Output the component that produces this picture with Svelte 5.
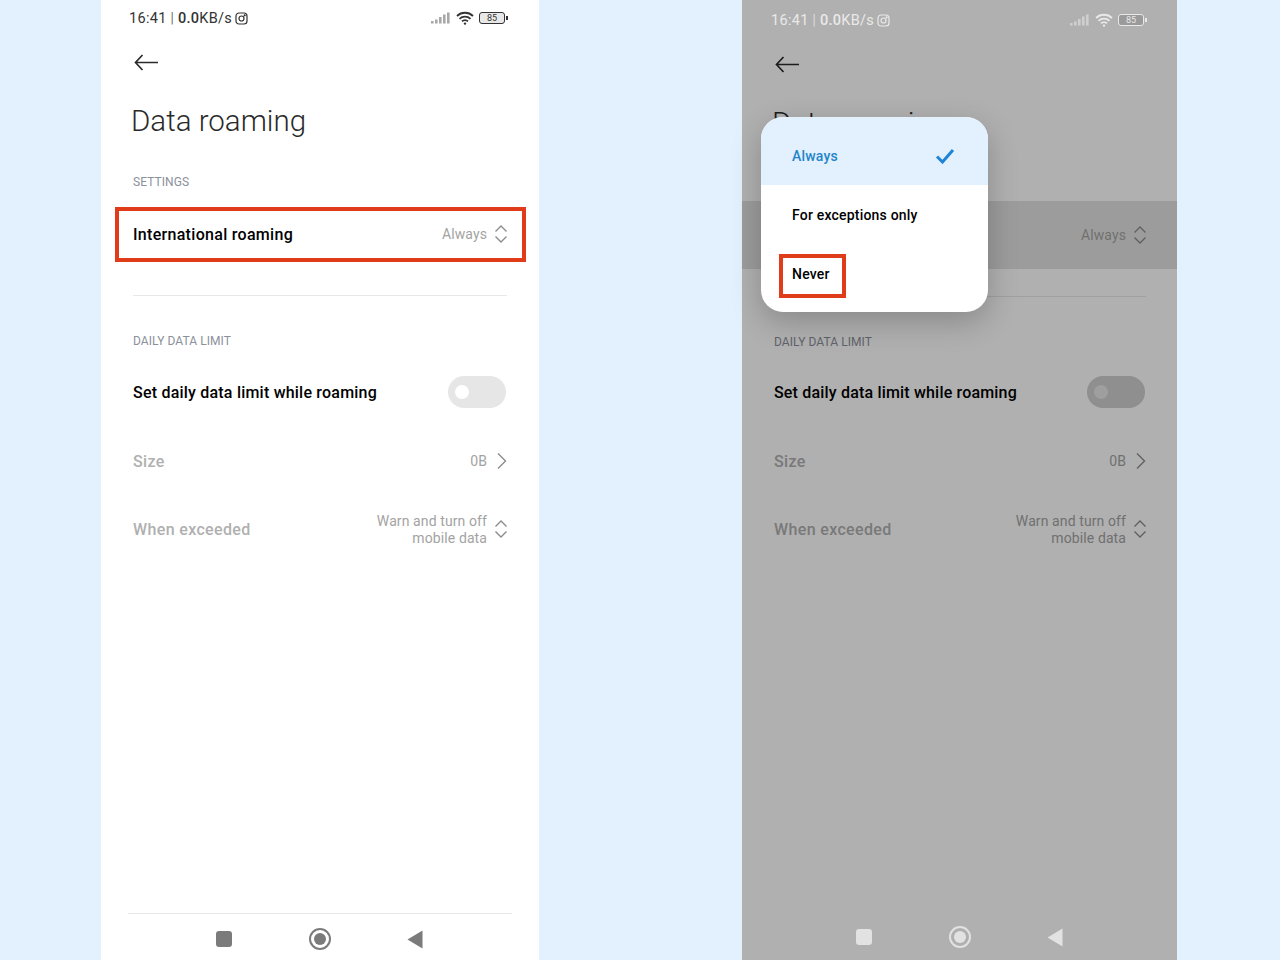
<script>
  const options = ['For exceptions only', 'Never'];
</script>

{#snippet updown()}
  <svg class="updown" width="14" height="20" viewBox="0 0 14 20" fill="none" stroke="currentColor" stroke-width="1.4"><path d="M1.500 7.500 7 2l5.500 5.500M1.500 12.500 7 18l5.500-5.500"/></svg>
{/snippet}

{#snippet status(dim)}
  <div class="status" class:dim>
    <span class="clock">16:41 <i>|</i> <b>0.0</b>KB/s</span>
    <svg class="insta" width="13" height="13" viewBox="0 0 13 13" fill="none" stroke="currentColor" stroke-width="1.200"><rect x="1" y="1" width="11" height="11" rx="3"/><circle cx="6.500" cy="6.500" r="2.500"/><circle cx="9.700" cy="3.300" r=".5" fill="currentColor"/></svg>
    <span class="spacer"></span>
    <svg class="signal" width="20" height="12" viewBox="0 0 20 12" fill="currentColor"><rect x="0" y="9" width="2.600" height="2.500"/><rect x="4" y="7.500" width="2.600" height="4"/><rect x="8" y="5" width="2.600" height="6.500"/><rect x="12" y="2.500" width="2.600" height="9"/><rect x="16" y="0.500" width="2.600" height="11"/></svg>
    <svg class="wifi" width="18" height="14" viewBox="0 0 18 14" fill="none" stroke="currentColor" stroke-width="1.800"><path d="M1 5a11.500 11.500 0 0 1 16 0M3.500 7.800a8 8 0 0 1 11 0M6 10.300a4.200 4.200 0 0 1 6 0"/><circle cx="9" cy="12.600" r="1.200" fill="currentColor" stroke="none"/></svg>
    <span class="battery"><span class="cell">85</span><span class="nub"></span></span>
  </div>
{/snippet}

{#snippet screen(dim)}
  <div class="content" class:dim>
    <div class="back">
      <svg width="24" height="17" viewBox="0 0 24 17" fill="none" stroke="#2b2b2b" stroke-width="1.700"><path d="M24 8.500H1.500M8.500 1 1.500 8.500l7 7.500"/></svg>
    </div>
    <h1>Data roaming</h1>
    <div class="label first">SETTINGS</div>
    <div class="row hl">
      <span class="name">International roaming</span>
      <span class="value">Always</span>
      {@render updown()}
    </div>
    <div class="divider"></div>
    <div class="label second">DAILY DATA LIMIT</div>
    <div class="row toggle-row">
      <span class="name">Set daily data limit while roaming</span>
      <span class="toggle"><span class="knob"></span></span>
    </div>
    <div class="row off">
      <span class="name">Size</span>
      <span class="value">0B</span>
      <svg class="chev" width="14" height="18" viewBox="0 0 14 18" fill="none" stroke="currentColor" stroke-width="1.400"><path d="M4 1.500 11.500 9 4 16.500"/></svg>
    </div>
    <div class="row off">
      <span class="name">When exceeded</span>
      <span class="value two">Warn and turn off<br />mobile data</span>
      {@render updown()}
    </div>
  </div>
{/snippet}

{#snippet navbar(dim)}
  <div class="nav" class:dim>
    <span class="slot"><span class="sq"></span></span>
    <span class="slot"><span class="ring"><span class="dot"></span></span></span>
    <span class="slot tri"><svg width="16" height="19" viewBox="0 0 16 19" fill="currentColor"><path d="M15.500.500v18L.500 9.500z"/></svg></span>
  </div>
{/snippet}

<div class="page">
  <section class="phone left">
    {@render status(false)}
    {@render screen(false)}
    {@render navbar(false)}
    <div class="callout call-row"></div>
  </section>

  <section class="phone right">
    {@render screen(true)}
    <div class="scrim"></div>
    {@render status(true)}
    {@render navbar(true)}
    <div class="popup">
      <div class="opt sel"><span>Always</span>
        <svg width="20" height="16" viewBox="0 0 20 16" fill="none" stroke="#1f85d8" stroke-width="3"><path d="M2 8.500 7.500 14 18 2"/></svg>
      </div>
      {#each options as o}
        <div class="opt">{o}</div>
      {/each}
      <div class="callout call-never"></div>
    </div>
  </section>
</div>

<style>
  :global(body) { margin: 0; }
  .page {
    width: 1280px; height: 960px; overflow: hidden;
    background: #e3f0fd; display: flex; padding-left: 101px; box-sizing: border-box; gap: 203px;
    font-family: Roboto, "Liberation Sans", sans-serif; color: #000;
  }
  .phone { position: relative; height: 960px; background: #fff; display: flex; flex-direction: column; }
  .left { width: 438px; }
  .right { width: 435px; }

  .status {
    height: 36px; padding: 0 31px 0 28px; display: flex; align-items: center;
    font-size: 14.5px; color: #333; flex: none; box-sizing: border-box;
  }
  .status.dim { position: absolute; top: 2px; left: 1px; right: 0; color: #e9e9e9; z-index: 2; padding-right: 30px; }
  .clock { letter-spacing: .3px; white-space: pre; }
  .clock i { font-style: normal; font-weight: 300; }
  .clock b { font-weight: 500; }
  .insta { margin-left: 3px; }
  .spacer { flex: 1; }
  .signal { color: #a8a8a8; margin-right: 5px; }
  .dim .signal { color: #cfcfcf; }
  .wifi { margin-right: 5px; }
  .battery { display: flex; align-items: center; }
  .cell {
    width: 24px; height: 10px; border: 1px solid #333; border-radius: 3px; background: #e8e8e8;
    font-size: 9px; line-height: 10px; text-align: center; color: #333;
  }
  .nub { width: 2px; height: 4px; background: #333; margin-left: 1px; }
  .dim .cell { border-color: #e9e9e9; background: #9a9a9a; color: #e9e9e9; }
  .dim .nub { background: #e9e9e9; }

  .content { padding: 0 32px; flex: none; }
  .content.dim { padding: 40px 31px 0 32px; }
  .back { height: 52px; display: flex; align-items: center; margin-left: 1px; padding-top: 1px; box-sizing: border-box; }
  .dim .back { height: 50px; padding: 0 0 2px; }
  h1 { margin: 0 0 0 -2px; height: 66px; line-height: 66px; font-size: 29.5px; font-weight: 300; color: #2a2a2a; }
  .label { font-size: 12px; height: 28px; line-height: 28px; color: #8b909b; letter-spacing: .07px; }
  .first { margin-top: 14px; }
  .dim .first { margin-top: 12px; }
  .second { margin-top: 31px; }
  .row { height: 68px; display: flex; align-items: center; font-size: 16px; }
  .first + .row { margin-top: 4px; }
  .dim .first + .row { margin-top: 5px; }
  .hl .name { font-weight: 500; letter-spacing: .3px; }
  .toggle-row .name { font-weight: 500; letter-spacing: .21px; }
  .dim .toggle-row .name { letter-spacing: .18px; }
  .name { flex: 1; }
  .dim .hl { background: #e3e3e3; margin: 0 -31px 0 -32px; padding: 0 31px 0 32px; }
  .value { font-size: 14px; color: #a3a3a3; letter-spacing: .1px; text-align: right; margin-right: 7px; }
  .value.two { line-height: 17px; padding-top: 1px; }
  .updown { color: #8c8c8c; margin-right: -1px; }
  .divider { height: 1px; background: #e6e8ea; margin-top: 27px; }
  .toggle-row { margin-top: 3px; }
  .dim .toggle-row { margin-top: 2px; }
  .toggle-row + .off { margin-top: 1px; }
  .toggle {
    width: 58px; height: 32px; border-radius: 16px; background: #e6e6e6; margin-right: 1px;
    display: flex; align-items: center; padding-left: 7px; box-sizing: border-box;
  }
  .knob { width: 14px; height: 14px; border-radius: 50%; background: #fff; }
  .dim .toggle { background: #cfcfcf; }
  .dim .knob { background: #e6e6e6; }
  .off .name { color: #b0b0b0; font-weight: 500; letter-spacing: .36px; }
  .off .chev { color: #8c8c8c; margin-right: -1px; }

  .nav {
    margin: auto 27px 0; height: 47px; padding-top: 4px; box-sizing: border-box; border-top: 1px solid #e6e8ea; display: flex; justify-content: center;
    align-items: center; color: #7b7b7b; flex: none;
  }
  .nav.dim { position: absolute; left: 0; right: 0; bottom: 2px; border-top-color: transparent; color: #e2e2e2; z-index: 2; }
  .slot { width: 96px; display: flex; justify-content: center; align-items: center; }
  .slot.tri { padding-right: 2px; box-sizing: border-box; }
  .sq { width: 16px; height: 16px; border-radius: 3px; background: currentColor; }
  .ring {
    width: 22px; height: 22px; border: 2px solid currentColor; border-radius: 50%; box-sizing: border-box;
    display: flex; align-items: center; justify-content: center;
  }
  .dot { width: 12px; height: 12px; border-radius: 50%; background: currentColor; }

  .scrim { position: absolute; inset: 0; background: rgba(0, 0, 0, .31); z-index: 1; }

  .popup {
    position: absolute; left: 19px; top: 117px; width: 227px; height: 195px; background: #fff;
    border-radius: 22px; box-shadow: 0 10px 30px rgba(0, 0, 0, .22); z-index: 3;
  }
  .opt { height: 59px; padding: 0 31px; display: flex; align-items: center; font-size: 14px; font-weight: 500; letter-spacing: .2px; }
  .opt.sel {
    height: 68px; background: #e3f0fd; color: #1f85c8; justify-content: space-between;
    border-radius: 22px 22px 0 0; padding: 10px 33px 0 31px; box-sizing: border-box;
  }
  .callout { position: absolute; border: 4px solid #e03c1a; box-sizing: border-box; z-index: 4; }
  .call-row { left: 14px; top: 207px; width: 411px; height: 55px; }
  .call-never { left: 18px; top: 137px; width: 67px; height: 44px; }
</style>
